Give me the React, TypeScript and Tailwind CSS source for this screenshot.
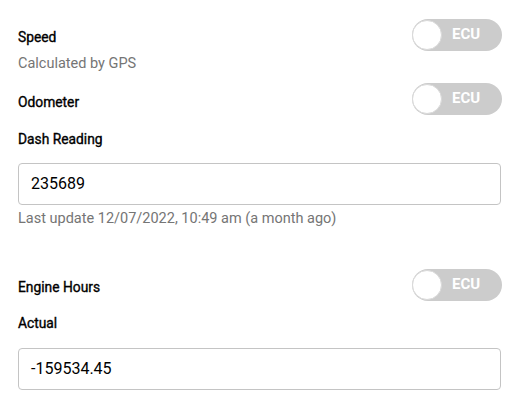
import React from 'react';

const EcuToggle: React.FC = () => (
  <div className="relative h-[32px] w-[90px] shrink-0 rounded-full bg-[#cccccc]">
    <div className="absolute left-0 top-[1px] h-[30px] w-[30px] rounded-full border border-[#d9d9d9] bg-white" />
    <span className="absolute left-[40px] top-[-1px] flex h-full items-center text-[15px] font-bold text-white">ECU</span>
  </div>
);

// Medium weight: regular Roboto with a thin stroke
const Label: React.FC<{ children: React.ReactNode }> = ({ children }) => (
  <div className="text-[13.8px] font-normal leading-[20px] text-black [-webkit-text-stroke:0.35px_black]">{children}</div>
);

const App: React.FC = () => {
  return (
    <div className="min-h-screen bg-white pl-[18px] pr-[24px] pt-[19px]" style={{ fontFamily: 'Roboto, sans-serif' }}>
      {/* Speed */}
      <div className="flex items-center justify-between">
        <div className="pt-[3px]"><Label>Speed</Label></div>
        <div className="-mr-px"><EcuToggle /></div>
      </div>
      <div className="mt-[3px] text-[14.5px] leading-[20px] text-[#757575]">Calculated by GPS</div>

      {/* Odometer */}
      <div className="mt-[9px] flex items-center justify-between">
        <div className="pt-[6px]"><Label>Odometer</Label></div>
        <div className="-mr-px"><EcuToggle /></div>
      </div>
      <div className="mt-[14px]"><Label>Dash Reading</Label></div>
      <div className="mt-[14px] flex h-[42px] items-center rounded-[4px] border border-[#c4c4c4] px-[12px] text-[16px] text-black">
        235689
      </div>
      <div className="mt-[4px] text-[14.5px] leading-[20px] text-[#757575]">Last update 12/07/2022, 10:49 am (a month ago)</div>

      {/* Engine Hours */}
      <div className="mt-[40px] flex items-center justify-between">
        <div className="pt-[3px]"><Label>Engine Hours</Label></div>
        <div className="-mr-px"><EcuToggle /></div>
      </div>
      <div className="mt-[12px]"><Label>Actual</Label></div>
      <div className="mt-[15px] flex h-[42px] items-center rounded-[4px] border border-[#c4c4c4] px-[12px] text-[16px] text-black">
        -159534.45
      </div>
    </div>
  );
};

export default App;
